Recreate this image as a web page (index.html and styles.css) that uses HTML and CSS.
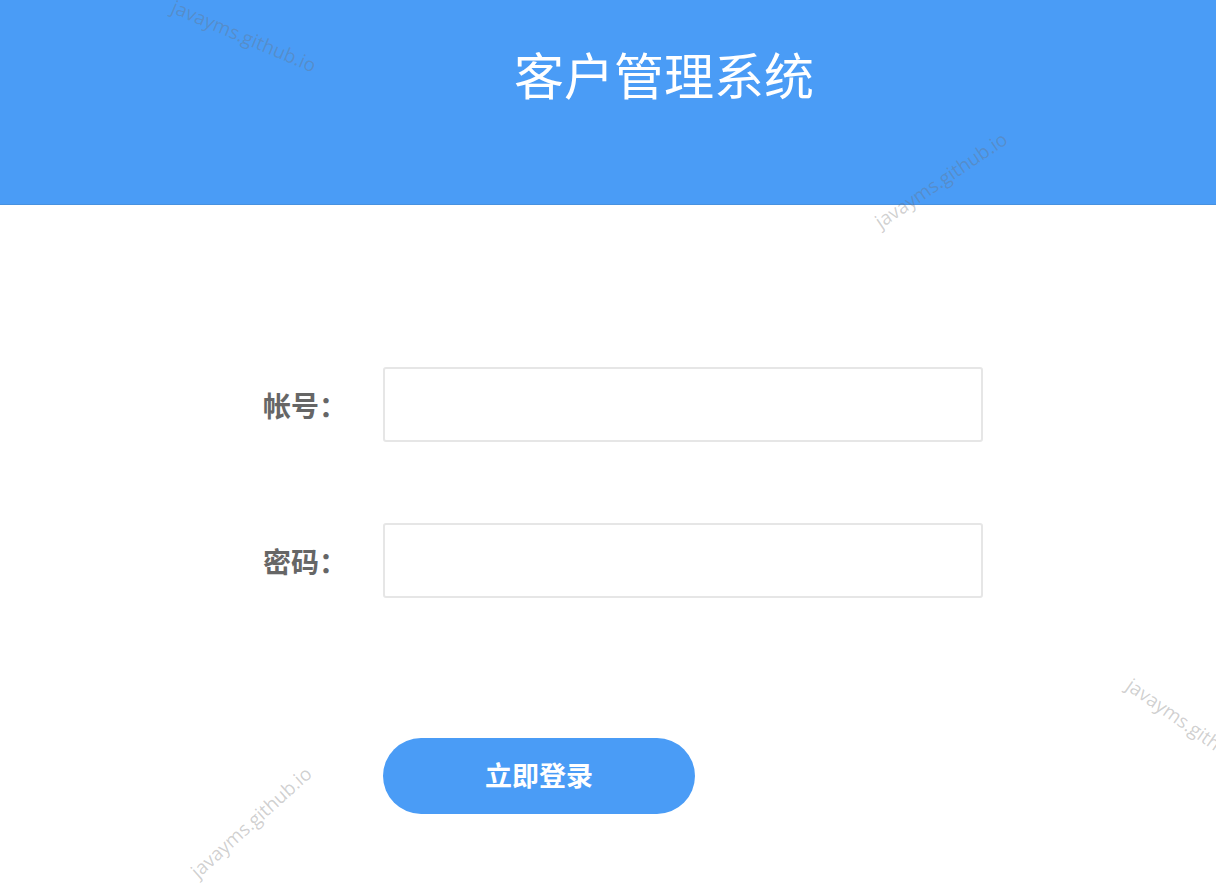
FILE: index.html
```html
<!DOCTYPE html>
<html lang="zh-CN">
<head>
<meta charset="utf-8">
<title>客户管理系统</title>
<link rel="stylesheet" href="styles.css">
</head>
<body>
<header class="header">
  <h1 class="title">客户管理系统</h1>
</header>
<main class="main">
  <form class="form">
    <div class="row">
      <label class="label">帐号：</label>
      <input class="input" type="text">
    </div>
    <div class="row">
      <label class="label">密码：</label>
      <input class="input" type="password">
    </div>
    <div class="actions">
      <button class="btn" type="button">立即登录</button>
    </div>
  </form>
</main>
<div class="wm wm1">javayms.github.io</div>
<div class="wm wm2">javayms.github.io</div>
<div class="wm wm3">javayms.github.io</div>
<div class="wm wm4">javayms.github.io</div>
</body>
</html>
```
FILE: styles.css
```css
html, body {
  margin: 0;
  padding: 0;
  background: #fff;
  font-family: "Noto Sans CJK SC", "Noto Sans", sans-serif;
}
body {
  position: relative;
  width: 1216px;
  height: 886px;
  overflow: hidden;
}
.header {
  height: 205px;
  box-sizing: border-box;
  background: #4a9cf6;
  border-bottom: 1px solid #4791e0;
  padding: 43px 0 0 112px;
}
.title {
  margin: 0;
  text-align: center;
  color: #fff;
  font-size: 50px;
  line-height: 60px;
  font-weight: 400;
  letter-spacing: 0;
}
.main {
  padding: 162px 0 0 263px;
}
.form {
  display: flex;
  flex-direction: column;
}
.row {
  display: flex;
  align-items: center;
  margin-bottom: 81px;
}
.row + .row {
  margin-bottom: 0;
}
.label {
  width: 120px;
  color: #666;
  font-size: 28px;
  font-weight: 700;
  line-height: 40px;
}
.input {
  width: 600px;
  height: 75px;
  box-sizing: border-box;
  border: 2px solid #e6e6e6;
  border-radius: 3px;
  margin: 0;
  padding: 0 12px;
  font-size: 20px;
  outline: none;
  background: #fff;
}
.actions {
  padding: 140px 0 0 120px;
}
.btn {
  width: 312px;
  height: 76px;
  border: none;
  border-radius: 38px;
  background: #4a9cf6;
  color: #fff;
  font-family: "Noto Sans CJK SC", sans-serif;
  font-size: 27px;
  line-height: 1;
  font-weight: 700;
  padding: 0 0 3px;
  cursor: pointer;
}
.wm {
  position: absolute;
  font-family: "Open Sans", "DejaVu Sans", sans-serif;
  font-size: 19px;
  color: rgba(110, 110, 110, 0.32);
  white-space: nowrap;
  pointer-events: none;
}
.wm1 { left: 244px; top: 36px; transform: translate(-50%, -50%) rotate(23deg); }
.wm2 { left: 941px; top: 180px; transform: translate(-50%, -50%) rotate(-34deg); }
.wm3 { left: 1192px; top: 727px; transform: translate(-50%, -50%) rotate(35deg); }
.wm4 { left: 251px; top: 822px; transform: translate(-50%, -50%) rotate(-42deg); }
```
